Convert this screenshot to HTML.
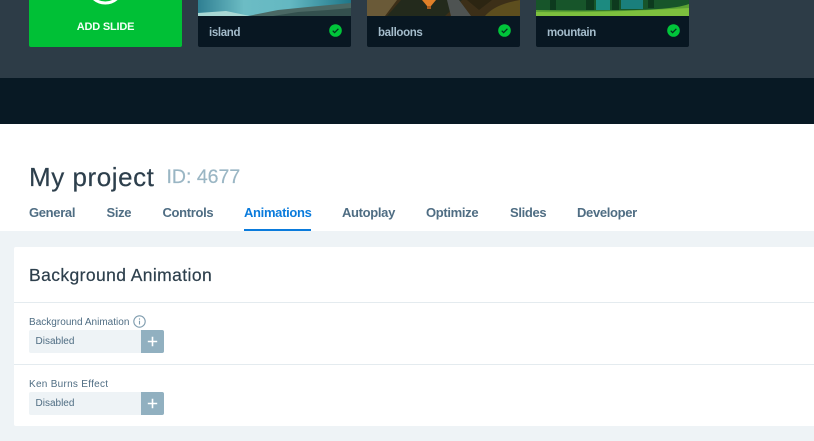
<!DOCTYPE html>
<html><head><meta charset="utf-8">
<style>
html,body{margin:0;padding:0}
body{width:814px;height:441px;overflow:hidden;position:relative;background:#fff;font-family:"Liberation Sans",sans-serif}
div{position:absolute;white-space:nowrap}
.card{top:-10px;width:153px;height:56.5px;background:#081722;border-radius:2px;overflow:hidden}
.card svg{position:absolute;left:0;top:0}
.name{left:11px;top:35.5px;font-size:11.5px;line-height:14px;font-weight:bold;color:#a4bccb;letter-spacing:-.35px}
.tab{top:205px;font-size:13px;line-height:15px;font-weight:bold;color:#4f6d83;letter-spacing:-.33px}
.lab{left:29px;font-size:10px;line-height:12px;color:#4f6d83}
.sel{left:29px;width:135px;height:23px;background:#eef3f6;border-radius:2px}
.sel span{position:absolute;left:6.5px;top:6px;font-size:10px;line-height:12px;color:#4f6d83;letter-spacing:0}
.pl{position:absolute;left:112px;top:0;width:23px;height:23px;background:#91b0c0;border-radius:0 2px 2px 0}
.st{-webkit-text-stroke:.2px currentColor}
</style></head><body>
<div style="left:0;top:0;width:814px;height:78px;background:#2d3c47"></div>
<div style="left:0;top:78px;width:814px;height:46px;background:#081924"></div>
<div style="left:29px;top:-10px;width:153px;height:56.5px;background:#00c036;border-radius:2px;overflow:hidden">
<svg width="153" height="20" style="position:absolute;left:0;top:0"><circle cx="76.3" cy="-4.5" r="17.5" fill="none" stroke="#fff" stroke-width="3"/></svg>
<div style="left:0;width:153px;text-align:center;top:29.5px;font-size:11px;line-height:14px;font-weight:bold;color:#f4fff7;letter-spacing:-.2px">ADD SLIDE</div>
</div>
<div class="card" style="left:198px">
<svg width="153" height="26"><defs><linearGradient id="g1" x1="0" x2="1" y1="0" y2="0"><stop offset="0" stop-color="#2f7f92"/><stop offset=".3" stop-color="#6cbcc4"/><stop offset=".6" stop-color="#64b8c2"/><stop offset="1" stop-color="#1f7688"/></linearGradient></defs><rect width="153" height="26" fill="url(#g1)"/><path d="M0 26L0 23L28 21L52 26Z" fill="#a9d8d4"/><path d="M50 26L80 20L110 17L153 13V26Z" fill="#4a6864"/><path d="M75 26L100 22L130 20L153 18V26Z" fill="#33504e"/></svg>
<div class="name">island</div>
<svg style="left:131px;top:34px" width="13" height="13" viewBox="0 0 13 13"><circle cx="6.5" cy="6.5" r="6.3" fill="#00c53a"/><path d="M3.7 6.7L5.6 8.6L9.4 4.8" fill="none" stroke="#06301f" stroke-width="1.2"/></svg>
</div>
<div class="card" style="left:367px">
<svg width="153" height="26"><rect width="153" height="26" fill="#3c2f18"/><path d="M0 26V10H30L18 26Z" fill="#6a5a38"/><path d="M20 26L34 10H95L78 26Z" fill="#232a1c"/><path d="M80 10H92L104 26H84Z" fill="#4e5352"/><path d="M118 26Q128 14 153 10V26Z" fill="#5d4e1e"/><path d="M100 10H125L112 20Z" fill="#2c2512"/><path d="M55 10H69L64 16H60Z" fill="#e07f28"/><rect x="60" y="16" width="4" height="3" fill="#a85c1f"/></svg>
<div class="name">balloons</div>
<svg style="left:131px;top:34px" width="13" height="13" viewBox="0 0 13 13"><circle cx="6.5" cy="6.5" r="6.3" fill="#00c53a"/><path d="M3.7 6.7L5.6 8.6L9.4 4.8" fill="none" stroke="#06301f" stroke-width="1.2"/></svg>
</div>
<div class="card" style="left:536px">
<svg width="153" height="26"><rect width="153" height="26" fill="#17552a"/><rect x="60" y="10" width="14" height="10" fill="#1c8a80"/><rect x="85" y="10" width="22" height="9" fill="#1a7f7c"/><path d="M14 10h6v10h-6zM50 10h8v10h-8zM76 10h7v10h-7zM112 10h6v8h-6z" fill="#0d3a1e"/><path d="M0 26V20Q60 21 100 20T153 14V26Z" fill="#5aa233"/><path d="M0 26V22Q70 23 153 18V26Z" fill="#7dc03e"/></svg>
<div class="name">mountain</div>
<svg style="left:131px;top:34px" width="13" height="13" viewBox="0 0 13 13"><circle cx="6.5" cy="6.5" r="6.3" fill="#00c53a"/><path d="M3.7 6.7L5.6 8.6L9.4 4.8" fill="none" stroke="#06301f" stroke-width="1.2"/></svg>
</div>

<div class="st" style="left:29px;top:161px;font-size:26px;line-height:32px;color:#2d3f4c;letter-spacing:.55px">My project</div>
<div class="st" style="left:166.5px;top:165px;font-size:19.5px;line-height:24px;color:#9ab6c4;letter-spacing:0">ID: 4677</div>

<div class="tab" style="left:29px">General</div>
<div class="tab" style="left:106.5px">Size</div>
<div class="tab" style="left:162.5px">Controls</div>
<div class="tab" style="left:244px;color:#0a7bdc">Animations</div>
<div class="tab" style="left:342px">Autoplay</div>
<div class="tab" style="left:426px">Optimize</div>
<div class="tab" style="left:510px">Slides</div>
<div class="tab" style="left:577px">Developer</div>
<div style="left:0;top:231px;width:814px;height:210px;background:#eef3f6"></div>
<div style="left:244px;top:229px;width:67px;height:2px;background:#0a7bdc"></div>

<div style="left:14px;top:247px;width:800px;height:179px;background:#fff;border-radius:2px 0 0 2px"></div>
<div class="st" style="left:29px;top:264.5px;font-size:17.5px;line-height:21px;color:#2d3f4c;letter-spacing:.4px">Background Animation</div>
<div style="left:14px;top:302px;width:800px;height:1px;background:#e4ebef"></div>
<div style="left:14px;top:364px;width:800px;height:1px;background:#e4ebef"></div>

<div class="lab" style="top:317px;letter-spacing:.02px">Background Animation</div>
<svg style="position:absolute;left:133px;top:315px" width="13" height="13" viewBox="0 0 13 13"><circle cx="6.5" cy="6.5" r="5.7" fill="none" stroke="#7f9cae" stroke-width="1.1"/><path d="M6.5 5.7V9.5M6.5 3.4V4.6" stroke="#7f9cae" stroke-width="1.1"/></svg>
<div class="sel" style="top:330px"><span>Disabled</span><div class="pl"><svg width="23" height="23" style="position:absolute;left:0;top:0"><path d="M11.5 6.8V16.2M6.8 11.5H16.2" stroke="#fff" stroke-width="1.6"/></svg></div></div>

<div class="lab" style="top:379px;letter-spacing:.28px">Ken Burns Effect</div>
<div class="sel" style="top:392px"><span>Disabled</span><div class="pl"><svg width="23" height="23" style="position:absolute;left:0;top:0"><path d="M11.5 6.8V16.2M6.8 11.5H16.2" stroke="#fff" stroke-width="1.6"/></svg></div></div>
</body></html>
